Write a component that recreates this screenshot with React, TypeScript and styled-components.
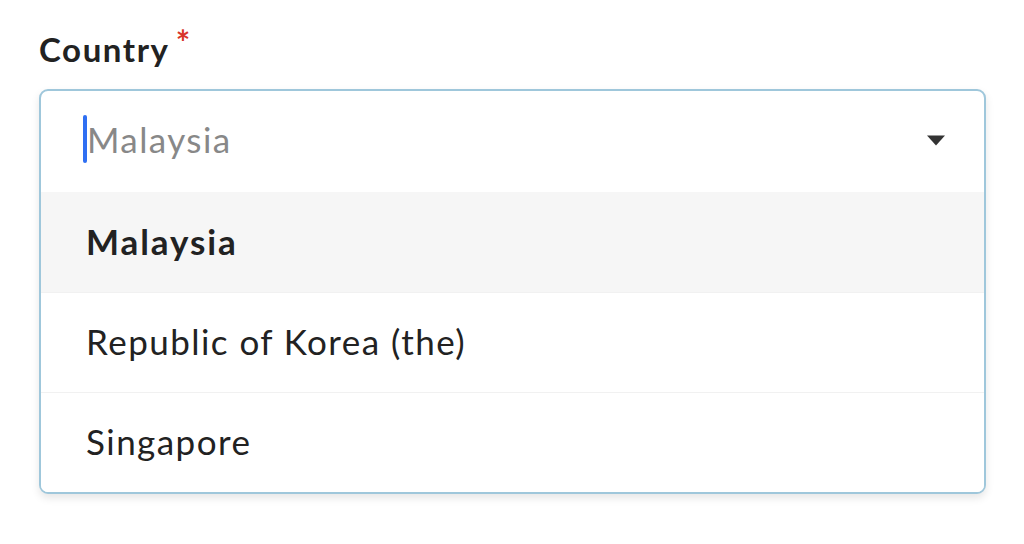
import React from "react";
import styled, { createGlobalStyle } from "styled-components";

const GlobalStyle = createGlobalStyle`
  html, body {
    margin: 0;
    padding: 0;
    background: #ffffff;
  }
  body {
    font-family: Lato, "Open Sans", sans-serif;
  }
`;

const Page = styled.div`
  width: 1024px;
  height: 544px;
  box-sizing: border-box;
  padding: 27px 38px 0 39px;
  display: flex;
  flex-direction: column;
`;

const Label = styled.label`
  display: flex;
  align-items: flex-start;
  font-size: 33px;
  font-weight: 700;
  letter-spacing: 1.6px;
  color: #222222;
  line-height: 44px;
  height: 44px;
  margin-bottom: 18px;
`;

const Required = styled.span`
  color: #d8352a;
  font-size: 34px;
  font-weight: 700;
  line-height: 30px;
  margin-left: 6px;
`;

const Select = styled.div`
  width: 947px;
  box-sizing: border-box;
  border: 2px solid #9fc7db;
  border-radius: 9px;
  background: #ffffff;
  box-shadow: 0 4px 8px rgba(0, 0, 0, 0.1);
  overflow: hidden;
  display: flex;
  flex-direction: column;
`;

const Control = styled.div`
  height: 101px;
  display: flex;
  align-items: center;
  padding: 0 38px 0 42px;
`;

const Caret = styled.span`
  display: inline-block;
  width: 4px;
  height: 48px;
  border-radius: 2px;
  background: #2f6ff2;
  margin-top: -6px;
`;

const Placeholder = styled.span`
  flex: 1;
  font-size: 35px;
  letter-spacing: 1.4px;
  color: #888888;
  line-height: 48px;
  margin-top: -6px;
`;

const Arrow = styled.svg`
  width: 20px;
  height: 11px;
  display: block;
  margin-top: -2px;
`;

const Option = styled.div<{ $active?: boolean; $divider?: boolean }>`
  height: 100px;
  box-sizing: border-box;
  padding: 0 0 4px 45px;
  display: flex;
  align-items: center;
  font-size: 35px;
  letter-spacing: ${(p) => (p.$active ? "1.9px" : "1.45px")};
  color: #222222;
  background: ${(p) => (p.$active ? "#f6f6f6" : "#ffffff")};
  font-weight: ${(p) => (p.$active ? 700 : 400)};
  border-top: 1px solid ${(p) => (p.$divider ? "#f1f1f1" : "transparent")};
`;

const options = ["Malaysia", "Republic of Korea (the)", "Singapore"];

export default function App() {
  return (
    <>
      <GlobalStyle />
      <Page>
        <Label>
          Country
          <Required>*</Required>
        </Label>
        <Select>
          <Control>
            <Caret />
            <Placeholder>Malaysia</Placeholder>
            <Arrow viewBox="0 0 20 11">
              <path d="M1 0.5 L19 0.5 L10 10.5 Z" fill="#333333" />
            </Arrow>
          </Control>
          {options.map((o, i) => (
            <Option key={o} $active={i === 0} $divider={i > 0}>
              {o}
            </Option>
          ))}
        </Select>
      </Page>
    </>
  );
}
